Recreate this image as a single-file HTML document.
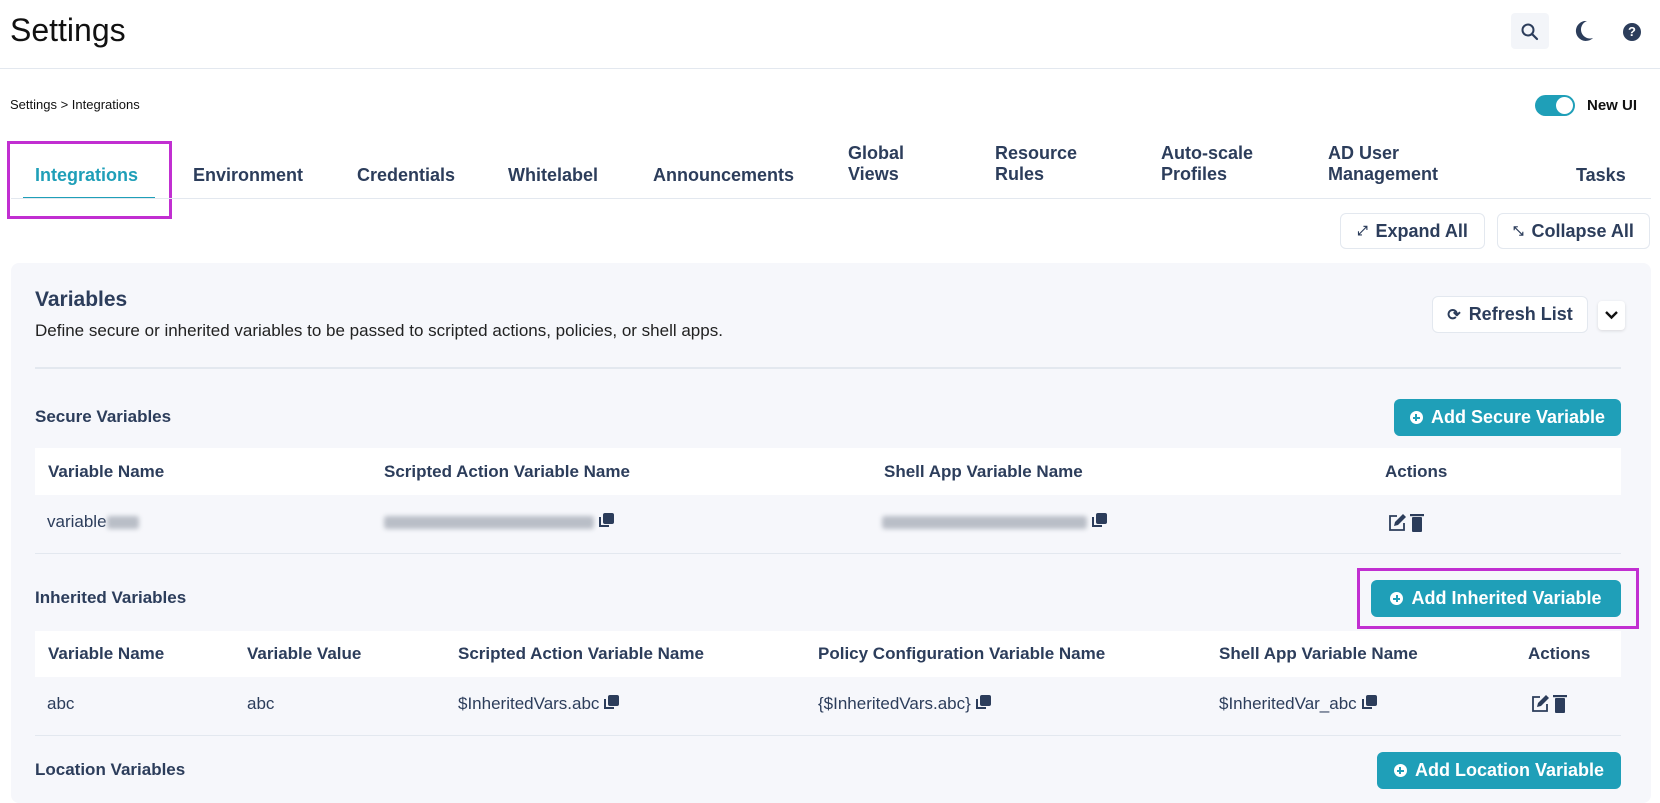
<!DOCTYPE html>
<html><head><meta charset="utf-8"><style>
*{box-sizing:border-box;margin:0;padding:0}
body{width:1660px;height:797px;overflow:hidden;background:#fff;font-family:"Liberation Sans",sans-serif;color:#2c3d5b;position:relative}
.a{position:absolute;white-space:nowrap}
.tab{position:absolute;font-weight:bold;font-size:18px;line-height:21px;color:#2c3d5b}
.btn{position:absolute;border:1px solid #e3e8ef;background:#fff;border-radius:6px;font-weight:bold;font-size:18px;display:flex;align-items:center;justify-content:center;gap:8px;color:#2c3d5b}
.tb{position:absolute;background:#1f9fb8;color:#fff;border-radius:6px;font-weight:bold;font-size:18px;display:flex;align-items:center;justify-content:center;gap:8px}
.dot{width:13px;height:13px;border-radius:50%;background:#fff;position:relative}
.dot:before{content:"";position:absolute;left:3px;top:5.5px;width:7px;height:2px;background:#1f9fb8}
.dot:after{content:"";position:absolute;left:5.5px;top:3px;width:2px;height:7px;background:#1f9fb8}
.th{position:absolute;left:35px;width:1586px;background:#fff}
.h{position:absolute;font-weight:bold;font-size:17px}
.c{position:absolute;font-size:17px}
.blur{display:inline-block;background:#b9bec7;filter:blur(2.5px);height:13px;vertical-align:middle;border-radius:3px}
.cp{display:inline-block;width:15px;height:15px;position:relative;vertical-align:-1px;margin-left:5px}
.cp:before{content:"";position:absolute;left:4px;top:0;width:11px;height:11px;background:#2c3d5b;border-radius:2px}
.cp:after{content:"";position:absolute;left:0;top:4px;width:8px;height:8px;border:2px solid #2c3d5b;border-top:none;border-right:none}
.line{position:absolute;left:35px;width:1586px;height:1px;background:#e3e8ef}
</style></head><body>
<div class="a" style="left:10px;top:12px;font-size:32px;color:#111">Settings</div>
<div class="a" style="left:1511px;top:13px;width:38px;height:36px;background:#f3f5f9;border-radius:4px"></div>
<svg class="a" style="left:1520px;top:22px" width="20" height="20" viewBox="0 0 20 20"><circle cx="8" cy="8" r="5.5" fill="none" stroke="#2c3d5b" stroke-width="2"/><line x1="12" y1="12" x2="17" y2="17" stroke="#2c3d5b" stroke-width="2.2" stroke-linecap="round"/></svg>
<svg class="a" style="left:1574px;top:20px" width="20" height="22" viewBox="0 0 20 22"><path d="M13 1A10 10 0 1 0 19 18A8 8 0 0 1 13 1Z" fill="#2c3d5b"/></svg>
<div class="a" style="left:1623px;top:23px;width:18px;height:18px;border-radius:50%;background:#2c3d5b;color:#fff;font-size:13px;font-weight:bold;text-align:center;line-height:18px">?</div>
<div class="a" style="left:0;top:68px;width:1660px;height:1px;background:#e3e8ef"></div>
<div class="a" style="left:10px;top:97px;font-size:13px;color:#111">Settings &gt; Integrations</div>
<div class="a" style="left:1535px;top:95px;width:40px;height:21px;border-radius:11px;background:#1f9fb8"></div>
<div class="a" style="left:1556px;top:97px;width:17px;height:17px;border-radius:50%;background:#fff"></div>
<div class="a" style="left:1587px;top:97px;font-size:15px;font-weight:bold;color:#111">New UI</div>

<div class="tab" style="left:35px;top:165px;color:#1f9fb8">Integrations</div>
<div class="a" style="left:23px;top:197px;width:132px;height:2px;background:#1f9fb8"></div>
<div class="a" style="left:7px;top:141px;width:165px;height:78px;border:3px solid #c12fd1"></div>
<div class="tab" style="left:193px;top:165px">Environment</div>
<div class="tab" style="left:357px;top:165px">Credentials</div>
<div class="tab" style="left:508px;top:165px">Whitelabel</div>
<div class="tab" style="left:653px;top:165px">Announcements</div>
<div class="tab" style="left:848px;top:143px">Global<br>Views</div>
<div class="tab" style="left:995px;top:143px">Resource<br>Rules</div>
<div class="tab" style="left:1161px;top:143px">Auto-scale<br>Profiles</div>
<div class="tab" style="left:1328px;top:143px">AD User<br>Management</div>
<div class="tab" style="left:1576px;top:165px">Tasks</div>
<div class="a" style="left:11px;top:198px;width:1640px;height:1px;background:#e3e8ef"></div>

<div class="btn" style="left:1340px;top:213px;width:145px;height:36px"><span style="font-size:13px">⤢</span>Expand All</div>
<div class="btn" style="left:1497px;top:213px;width:153px;height:36px"><span style="font-size:13px">⤡</span>Collapse All</div>

<div class="a" style="left:11px;top:263px;width:1640px;height:540px;background:#f6f7fb;border-radius:8px"></div>
<div class="a" style="left:35px;top:288px;font-size:21px;font-weight:bold">Variables</div>
<div class="a" style="left:35px;top:321px;font-size:17px;color:#222">Define secure or inherited variables to be passed to scripted actions, policies, or shell apps.</div>
<div class="btn" style="left:1432px;top:296px;width:156px;height:37px"><span style="font-size:16px">⟳</span>Refresh List</div>
<div class="a" style="left:1598px;top:301px;width:27px;height:29px;background:#fff;border-radius:4px;box-shadow:0 1px 3px rgba(0,0,0,.12)"></div>
<svg class="a" style="left:1604px;top:309px" width="15" height="12" viewBox="0 0 15 12"><path d="M2 3l5.5 5.5L13 3" fill="none" stroke="#111" stroke-width="2.4"/></svg>
<div class="line" style="top:367px;height:2px"></div>

<div class="a" style="left:35px;top:407px;font-size:17px;font-weight:bold">Secure Variables</div>
<div class="tb" style="left:1394px;top:399px;width:227px;height:37px"><span class="dot"></span>Add Secure Variable</div>
<div class="th" style="top:448px;height:47px"></div>
<div class="h" style="left:48px;top:462px">Variable Name</div>
<div class="h" style="left:384px;top:462px">Scripted Action Variable Name</div>
<div class="h" style="left:884px;top:462px">Shell App Variable Name</div>
<div class="h" style="left:1385px;top:462px">Actions</div>
<div class="c" style="left:47px;top:512px">variable<span class="blur" style="width:32px"></span></div>
<div class="c" style="left:384px;top:512px"><span class="blur" style="width:210px"></span><span class="cp"></span></div>
<div class="c" style="left:882px;top:512px"><span class="blur" style="width:205px"></span><span class="cp"></span></div>
<svg class="a" style="left:1388px;top:512px" width="36" height="20" viewBox="0 0 36 20"><path d="M9 4H2v14h14V11" fill="none" stroke="#2c3d5b" stroke-width="1.8"/><path d="M6 14l1-4 8-8 3 3-8 8z" fill="#2c3d5b"/><rect x="24" y="5" width="10" height="15" rx="1" fill="#2c3d5b"/><rect x="22" y="2" width="14" height="2.2" fill="#2c3d5b"/></svg>
<div class="line" style="top:553px"></div>

<div class="a" style="left:35px;top:588px;font-size:17px;font-weight:bold">Inherited Variables</div>
<div class="tb" style="left:1371px;top:580px;width:250px;height:37px"><span class="dot"></span>Add Inherited Variable</div>
<div class="a" style="left:1357px;top:568px;width:282px;height:61px;border:3px solid #c12fd1"></div>
<div class="th" style="top:631px;height:46px"></div>
<div class="h" style="left:48px;top:644px">Variable Name</div>
<div class="h" style="left:247px;top:644px">Variable Value</div>
<div class="h" style="left:458px;top:644px">Scripted Action Variable Name</div>
<div class="h" style="left:818px;top:644px">Policy Configuration Variable Name</div>
<div class="h" style="left:1219px;top:644px">Shell App Variable Name</div>
<div class="h" style="left:1528px;top:644px">Actions</div>
<div class="c" style="left:47px;top:694px">abc</div>
<div class="c" style="left:247px;top:694px">abc</div>
<div class="c" style="left:458px;top:694px">$InheritedVars.abc<span class="cp"></span></div>
<div class="c" style="left:818px;top:694px">{$InheritedVars.abc}<span class="cp"></span></div>
<div class="c" style="left:1219px;top:694px">$InheritedVar_abc<span class="cp"></span></div>
<svg class="a" style="left:1531px;top:693px" width="36" height="20" viewBox="0 0 36 20"><path d="M9 4H2v14h14V11" fill="none" stroke="#2c3d5b" stroke-width="1.8"/><path d="M6 14l1-4 8-8 3 3-8 8z" fill="#2c3d5b"/><rect x="24" y="5" width="10" height="15" rx="1" fill="#2c3d5b"/><rect x="22" y="2" width="14" height="2.2" fill="#2c3d5b"/></svg>
<div class="line" style="top:735px"></div>

<div class="a" style="left:35px;top:760px;font-size:17px;font-weight:bold">Location Variables</div>
<div class="tb" style="left:1377px;top:752px;width:244px;height:37px"><span class="dot"></span>Add Location Variable</div>
</body></html>
